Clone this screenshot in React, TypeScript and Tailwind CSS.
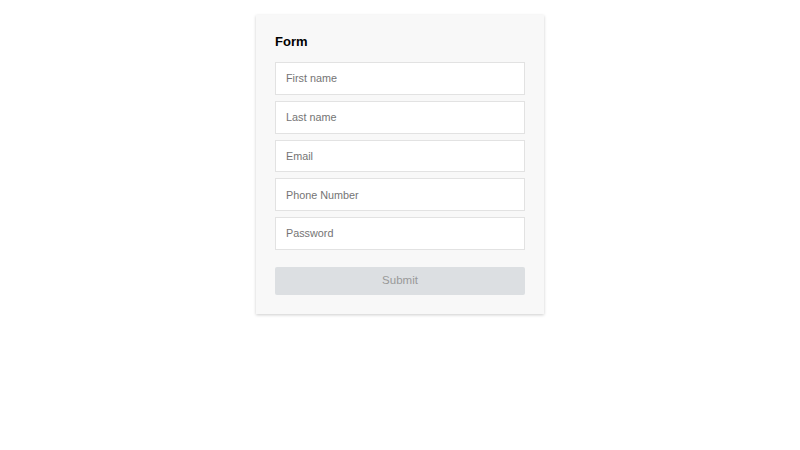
import React from 'react';

const fields = ['First name', 'Last name', 'Email', 'Phone Number', 'Password'];

const App = () => {
  return (
    <div className="min-h-[450px] w-full bg-white pt-[15px]" style={{ fontFamily: '"Liberation Sans", Arial, sans-serif' }}>
      <div className="mx-auto flex w-[288px] flex-col bg-[#f8f8f8] px-[19px] pb-[19px] pt-[19px] shadow-[0_1px_3px_rgba(0,0,0,0.2)]">
        <h1 className="mb-[12px] h-[16px] text-[13px] font-bold leading-[16px] text-black">Form</h1>
        <div className="flex flex-col gap-[6px]">
          {fields.map(label => (
            <input
              key={label}
              type={label === 'Password' ? 'password' : 'text'}
              placeholder={label}
              className="h-[32.75px] w-full border border-[#e2e2e2] bg-white pl-[10px] text-[10.8px] text-black outline-none placeholder:text-[#747474]"
            />
          ))}
        </div>
        <button
          disabled
          className="mt-[17px] h-[28px] w-full rounded-[2px] bg-[#dcdfe2] text-[11.5px] text-[#999]"
        >
          Submit
        </button>
      </div>
    </div>
  );
};

export default App;
